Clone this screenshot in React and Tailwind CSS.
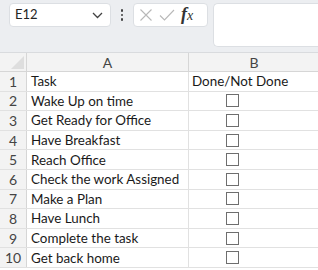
import React from "react";

const rows = [
  "Task",
  "Wake Up on time",
  "Get Ready for Office",
  "Have Breakfast",
  "Reach Office",
  "Check the work Assigned",
  "Make a Plan",
  "Have Lunch",
  "Complete the task",
  "Get back home",
];

export default function App() {
  return (
    <div
      className="w-[318px] h-[270px] overflow-hidden bg-white text-[#1f1f1f]"
      style={{ fontFamily: "Lato, 'Liberation Sans', sans-serif" }}
    >
      {/* formula bar band */}
      <div className="h-[52px] bg-[#eceef1] flex items-start pt-[3px] pl-[9px]">
        <div className="w-[102px] h-[24px] bg-white border border-[#dcdfe3] rounded-[4px] flex items-center justify-between pl-[5px] pr-[7px]">
          <span className="text-[13px] text-[#242424]">E12</span>
          <svg width="11" height="7" viewBox="0 0 11 7" fill="none">
            <path d="M1 1l4.5 4.5L10 1" stroke="#424242" strokeWidth="1.3" />
          </svg>
        </div>
        <div className="w-[22px] h-[24px] flex flex-col items-center justify-center gap-[2px]">
          <div className="w-[2.5px] h-[2.5px] rounded-full bg-[#424242]" />
          <div className="w-[2.5px] h-[2.5px] rounded-full bg-[#424242]" />
          <div className="w-[2.5px] h-[2.5px] rounded-full bg-[#424242]" />
        </div>
        <div className="w-[75px] h-[24px] bg-white border border-[#dcdfe3] rounded-[4px] flex items-center pl-[5px] gap-[6px]">
          <svg width="14" height="14" viewBox="0 0 14 14" fill="none">
            <path d="M1.5 1.5l11 11M12.5 1.5l-11 11" stroke="#b8b8b8" strokeWidth="1.1" />
          </svg>
          <svg width="16" height="12" viewBox="0 0 16 12" fill="none">
            <path d="M1 6.5l4.5 4.5L15 1" stroke="#b8b8b8" strokeWidth="1.1" />
          </svg>
          <span
            className="text-[18px] italic font-bold text-[#333] leading-none -mt-[2px]"
            style={{ fontFamily: "'Liberation Serif', serif" }}
          >
            f<span className="text-[14px] font-normal">x</span>
          </span>
        </div>
        <div className="ml-[5px] flex-1 h-[44px] bg-white border border-[#dcdfe3] rounded-l-[5px] border-r-0" />
      </div>

      {/* column header */}
      <div className="flex h-[20px] bg-[#f3f3f3] border-t border-[#d9dbde] border-b border-b-[#d6d6d6]">
        <div className="w-[27px] shrink-0 border-r border-[#d6d6d6] relative">
          <svg className="absolute right-[2px] bottom-[2px]" width="13" height="13" viewBox="0 0 13 13">
            <path d="M13 0V13H0Z" fill="#dedede" />
          </svg>
        </div>
        <div className="w-[162px] shrink-0 border-r border-[#d6d6d6] flex items-center justify-center text-[14px] text-[#444]">
          A
        </div>
        <div className="w-[130px] shrink-0 flex items-center justify-center text-[14px] text-[#444]">
          B
        </div>
      </div>

      {/* rows */}
      {rows.map((r, i) => (
        <div key={i} className="flex h-[19.6px] border-b border-[#e1e1e1]">
          <div className="w-[27px] shrink-0 bg-[#f3f3f3] border-r border-[#d6d6d6] flex items-center justify-center text-[14px] text-[#444]">
            {i + 1}
          </div>
          <div className="w-[162px] shrink-0 border-r border-[#e1e1e1] flex items-center pl-[4px] text-[13.4px] text-[#1a1a1a] whitespace-nowrap">
            {r}
          </div>
          <div className="w-[130px] shrink-0 flex items-center text-[13.4px] text-[#1a1a1a] whitespace-nowrap">
            {i === 0 ? (
              <span className="pl-[3px]">Done/Not Done</span>
            ) : (
              <div className="ml-[37px] w-[13px] h-[13px] border-[1.5px] border-[#6e6e6e]" />
            )}
          </div>
        </div>
      ))}
    </div>
  );
}
